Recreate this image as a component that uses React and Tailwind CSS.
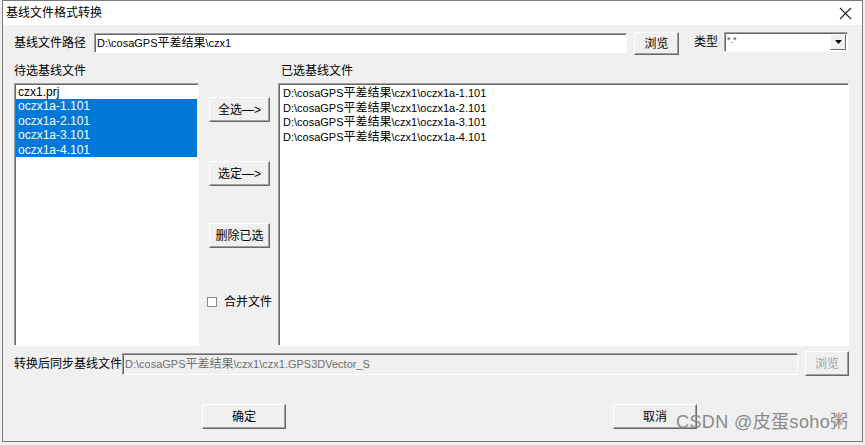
import React from "react";

const font = { fontFamily: '"Liberation Sans", "Noto Sans CJK SC", sans-serif' };

// classic raised 3d button
function Btn({ children, className = "", disabled = false }) {
    return (
        <div
            className={`flex items-center justify-center bg-[#f0f0f0] text-[12px] border border-t-white border-l-white border-r-[#696969] border-b-[#696969] shadow-[inset_-1px_-1px_#a0a0a0] ${disabled ? "text-[#a0a0a0]" : "text-black"} ${className}`}
        >
            {children}
        </div>
    );
}

// file path text: latin a bit narrower than the labels
function Path({ text }) {
    return (
        <span className="whitespace-nowrap">
            {text.split(/([\u4e00-\u9fff]+)/).map((part, i) =>
                /[\u4e00-\u9fff]/.test(part) ? (
                    <span key={i} className="text-[12px]">{part}</span>
                ) : (
                    <span key={i} className="text-[11px]">{part}</span>
                )
            )}
        </span>
    );
}

// sunken field border
const sunken =
    "border border-t-[#a0a0a0] border-l-[#a0a0a0] border-r-white border-b-white shadow-[inset_1px_1px_#696969]";

export default function App() {
    const candidates = ["czx1.prj", "oczx1a-1.101", "oczx1a-2.101", "oczx1a-3.101", "oczx1a-4.101"];
    const chosen = [
        "D:\\cosaGPS平差结果\\czx1\\oczx1a-1.101",
        "D:\\cosaGPS平差结果\\czx1\\oczx1a-2.101",
        "D:\\cosaGPS平差结果\\czx1\\oczx1a-3.101",
        "D:\\cosaGPS平差结果\\czx1\\oczx1a-4.101",
    ];

    return (
        <div style={font} className="relative w-[865px] h-[445px] bg-[#f0f0f0] pl-[2px] pr-[2px] pb-[3px] text-[12px] text-black">
            <div className="h-full flex flex-col border border-[#7a7a7a] bg-[#f0f0f0]">
                {/* Title bar */}
                <div className="h-[24px] shrink-0 bg-white flex items-center justify-between pl-[3px] pr-[10px]">
                    <span className="text-[12px] leading-none">基线文件格式转换</span>
                    <svg width="13" height="13" viewBox="0 0 13 13">
                        <path d="M1 1 L12 12 M12 1 L1 12" stroke="#222" strokeWidth="1.1" fill="none" />
                    </svg>
                </div>

                {/* Body */}
                <div className="flex-1 flex flex-col pl-[11px]">
                    {/* Row 1 */}
                    <div className="flex items-start mt-[7px] h-[23px]">
                        <span className="w-[80px] mt-[4px] leading-[14px]">基线文件路径</span>
                        <div className={`w-[533px] h-[20px] mt-[1px] bg-white ${sunken} flex items-center pl-[2px]`}>
                            <Path text={"D:\\cosaGPS平差结果\\czx1"} />
                        </div>
                        <Btn className="w-[45px] h-[23px] ml-[7px]">浏览</Btn>
                        <span className="ml-[15px] w-[30px] mt-[3px] leading-[14px]">类型</span>
                        <div className={`w-[124px] h-[20px] bg-white ${sunken} flex items-center justify-between`}>
                            <span className="pl-[2px] text-[9px] leading-none text-[#444] mb-[4px]">*.*</span>
                            <div className="w-[16px] h-[16px] mr-[1px] bg-[#f0f0f0] border border-t-white border-l-white border-r-[#696969] border-b-[#696969] flex items-center justify-center">
                                <svg width="7" height="4" viewBox="0 0 7 4">
                                    <path d="M0 0 H7 L3.5 4 Z" fill="#000" />
                                </svg>
                            </div>
                        </div>
                    </div>

                    {/* Row 2 labels */}
                    <div className="flex items-center h-[28px] pt-[3px]">
                        <span className="w-[267px]">待选基线文件</span>
                        <span>已选基线文件</span>
                    </div>

                    {/* Main area */}
                    <div className="flex h-[263px]">
                        <div className={`w-[185px] h-full bg-white ${sunken} pt-[1px] pl-[1px] pr-[1px]`}>
                            {candidates.map((c, i) => (
                                <div
                                    key={c}
                                    className={`pl-[2px] flex items-center ${i === 0 ? "h-[14px]" : "h-[14.5px] bg-[#0078d7] text-white"}`}
                                >
                                    {c}
                                </div>
                            ))}
                        </div>

                        <div className="w-[79px] flex flex-col pl-[10px]">
                            <Btn className="w-[61px] h-[25px] mt-[14px]">全选—&gt;</Btn>
                            <Btn className="w-[61px] h-[25px] mt-[39px]">选定—&gt;</Btn>
                            <Btn className="w-[61px] h-[25px] mt-[37px]">删除已选</Btn>
                            <div className="flex items-center mt-[45px] ml-[-2px]">
                                <div className="w-[10px] h-[10px] bg-white border border-[#8a8a8a]" />
                                <span className="ml-[7px]">合并文件</span>
                            </div>
                        </div>

                        <div className={`w-[571px] h-full bg-white ${sunken} pt-[2px] pl-[4px]`}>
                            {chosen.map((c) => (
                                <div key={c} className="h-[14.5px] flex items-center">
                                    <Path text={c} />
                                </div>
                            ))}
                        </div>
                    </div>

                    {/* Output file row */}
                    <div className="flex items-start mt-[5px] h-[25px]">
                        <span className="w-[108px] mt-[6px] leading-[14px]">转换后同步基线文件</span>
                        <div className={`w-[676px] h-[22px] mt-[2px] bg-[#f0f0f0] ${sunken} flex items-center pl-[2px] text-[#6d6d6d]`}>
                            <Path text={"D:\\cosaGPS平差结果\\czx1\\czx1.GPS3DVector_S"} />
                        </div>
                        <Btn disabled className="w-[44px] h-[25px] ml-[7px]">浏览</Btn>
                    </div>

                    {/* Bottom buttons */}
                    <div className="flex mt-[28px]">
                        <Btn className="w-[84px] h-[25px] ml-[188px]">确定</Btn>
                        <Btn className="w-[84px] h-[25px] ml-[327px]">取消</Btn>
                    </div>
                </div>
            </div>

            {/* watermark */}
            <div className="absolute left-[676px] top-[411px] text-[18px] leading-[22px] tracking-[0.4px] text-[#8a8a8a] whitespace-nowrap">
                CSDN @皮蛋soho粥
            </div>
        </div>
    );
}
